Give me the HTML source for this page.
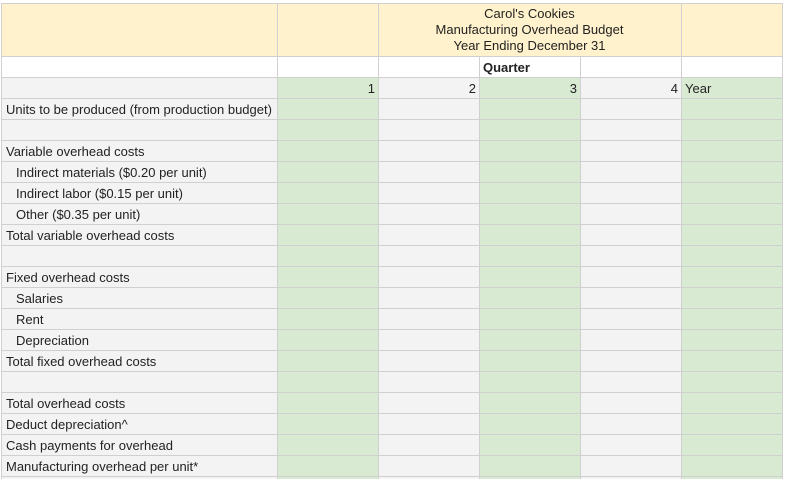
<!DOCTYPE html>
<html><head><style>
body{margin:0;width:786px;height:479px;overflow:hidden;background:#fff;font-family:"Liberation Sans",Arial,sans-serif;font-size:13px;color:#222;position:relative}
div{position:absolute;box-sizing:border-box}
.t{white-space:nowrap;line-height:21px;height:21px}
</style></head><body>
<!-- backgrounds -->
<div style="left:1px;top:3px;width:781px;height:53px;background:#fff2cc"></div>
<div style="left:1px;top:77px;width:781px;height:402px;background:#f3f3f3"></div>
<div style="left:277px;top:77px;width:101px;height:402px;background:#d9ead3"></div>
<div style="left:479px;top:77px;width:101px;height:402px;background:#d9ead3"></div>
<div style="left:681px;top:77px;width:101px;height:402px;background:#d9ead3"></div>
<!-- vertical lines -->
<div style="left:1px;top:3px;width:1px;height:476px;background:#d0d0d0"></div>
<div style="left:277px;top:3px;width:1px;height:476px;background:#d0d0d0"></div>
<div style="left:378px;top:56px;width:1px;height:423px;background:#d0d0d0"></div>
<div style="left:378px;top:3px;width:1px;height:53px;background:#d0d0d0"></div>
<div style="left:479px;top:56px;width:1px;height:423px;background:#d0d0d0"></div>
<div style="left:580px;top:56px;width:1px;height:423px;background:#d0d0d0"></div>
<div style="left:681px;top:3px;width:1px;height:476px;background:#d0d0d0"></div>
<div style="left:782px;top:3px;width:1px;height:476px;background:#d0d0d0"></div>
<!-- horizontal lines -->
<div style="left:1px;top:3px;width:782px;height:1px;background:#d0d0d0"></div>
<div style="left:1px;top:56px;width:782px;height:1px;background:#d0d0d0"></div>
<div style="left:1px;top:77px;width:782px;height:1px;background:#d0d0d0"></div>
<div style="left:1px;top:98px;width:782px;height:1px;background:#d0d0d0"></div>
<div style="left:1px;top:119px;width:782px;height:1px;background:#d0d0d0"></div>
<div style="left:1px;top:140px;width:782px;height:1px;background:#d0d0d0"></div>
<div style="left:1px;top:161px;width:782px;height:1px;background:#d0d0d0"></div>
<div style="left:1px;top:182px;width:782px;height:1px;background:#d0d0d0"></div>
<div style="left:1px;top:203px;width:782px;height:1px;background:#d0d0d0"></div>
<div style="left:1px;top:224px;width:782px;height:1px;background:#d0d0d0"></div>
<div style="left:1px;top:245px;width:782px;height:1px;background:#d0d0d0"></div>
<div style="left:1px;top:266px;width:782px;height:1px;background:#d0d0d0"></div>
<div style="left:1px;top:287px;width:782px;height:1px;background:#d0d0d0"></div>
<div style="left:1px;top:308px;width:782px;height:1px;background:#d0d0d0"></div>
<div style="left:1px;top:329px;width:782px;height:1px;background:#d0d0d0"></div>
<div style="left:1px;top:350px;width:782px;height:1px;background:#d0d0d0"></div>
<div style="left:1px;top:371px;width:782px;height:1px;background:#d0d0d0"></div>
<div style="left:1px;top:392px;width:782px;height:1px;background:#d0d0d0"></div>
<div style="left:1px;top:413px;width:782px;height:1px;background:#d0d0d0"></div>
<div style="left:1px;top:434px;width:782px;height:1px;background:#d0d0d0"></div>
<div style="left:1px;top:455px;width:782px;height:1px;background:#d0d0d0"></div>
<div style="left:1px;top:476px;width:782px;height:1px;background:#d0d0d0"></div>
<!-- title -->
<div style="left:378px;top:6px;width:303px;text-align:center;line-height:16px">Carol's Cookies<br>Manufacturing Overhead Budget<br>Year Ending December 31</div>
<div class="t" style="left:483px;top:57px;font-weight:bold">Quarter</div>
<div class="t" style="left:277px;top:78px;width:98px;text-align:right">1</div>
<div class="t" style="left:378px;top:78px;width:98px;text-align:right">2</div>
<div class="t" style="left:479px;top:78px;width:98px;text-align:right">3</div>
<div class="t" style="left:580px;top:78px;width:98px;text-align:right">4</div>
<div class="t" style="left:685px;top:78px">Year</div>
<div class="t" style="left:6px;top:99px">Units to be produced (from production budget)</div>
<div class="t" style="left:6px;top:141px">Variable overhead costs</div>
<div class="t" style="left:16px;top:162px">Indirect materials ($0.20 per unit)</div>
<div class="t" style="left:16px;top:183px">Indirect labor ($0.15 per unit)</div>
<div class="t" style="left:16px;top:204px">Other ($0.35 per unit)</div>
<div class="t" style="left:6px;top:225px">Total variable overhead costs</div>
<div class="t" style="left:6px;top:267px">Fixed overhead costs</div>
<div class="t" style="left:16px;top:288px">Salaries</div>
<div class="t" style="left:16px;top:309px">Rent</div>
<div class="t" style="left:16px;top:330px">Depreciation</div>
<div class="t" style="left:6px;top:351px">Total fixed overhead costs</div>
<div class="t" style="left:6px;top:393px">Total overhead costs</div>
<div class="t" style="left:6px;top:414px">Deduct depreciation^</div>
<div class="t" style="left:6px;top:435px">Cash payments for overhead</div>
<div class="t" style="left:6px;top:456px">Manufacturing overhead per unit*</div>
</body></html>
